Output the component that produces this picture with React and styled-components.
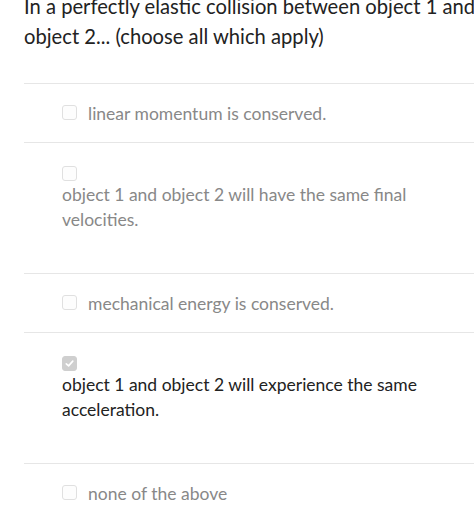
import styled, { createGlobalStyle } from 'styled-components'

const Global = createGlobalStyle`
    html, body {
        margin: 0;
        padding: 0;
        background: #fff;
        overflow: hidden;
    }
    body {
        font-family: Lato, "Open Sans", sans-serif;
    }
`

const Page = styled.div`
    width: 474px;
    height: 512px;
    overflow: hidden;
    padding-left: 24px;
    box-sizing: border-box;
`

const Question = styled.div`
    margin-top: -9px;
    margin-bottom: 32px;
    font-size: 20.2px;
    line-height: 30px;
    color: #222;
    width: 470px;
`

const Answers = styled.div`
    display: flex;
    flex-direction: column;
`

const Option = styled.label`
    display: flex;
    flex-direction: ${props => props.stacked ? 'column' : 'row'};
    align-items: ${props => props.stacked ? 'flex-start' : 'center'};
    border-top: 1px solid #e6e6e6;
    padding: ${props => props.stacked ? '17px 0 41px 38px' : '17px 0 16px 38px'};
    font-size: 17.5px;
    line-height: 25px;
    color: ${props => props.checked ? '#222' : '#888'};
`

const Box = styled.span`
    flex: none;
    width: 15px;
    height: 15px;
    box-sizing: border-box;
    border-radius: 3px;
    border: 1px solid ${props => props.checked ? '#cfcfcf' : '#e0e0e0'};
    background: ${props => props.checked ? '#cfcfcf' : '#fdfdfd'};
    display: flex;
    align-items: center;
    justify-content: center;
    margin: ${props => props.stacked ? '6px 0 1px 0' : '-3px 11px 0 0'};
`

const Text = styled.span`
    display: block;
    max-width: 412px;
`

const Check = () => (
    <svg width="11" height="11" viewBox="0 0 12 12">
        <path d="M2.5 6.3 L5 8.6 L9.6 3.4" fill="none" stroke="#fff" strokeWidth="1.8" strokeLinecap="round" strokeLinejoin="round" />
    </svg>
)

const answers = [
    { text: 'linear momentum is conserved.' },
    { text: 'object 1 and object 2 will have the same final velocities.', stacked: true },
    { text: 'mechanical energy is conserved.' },
    { text: 'object 1 and object 2 will experience the same acceleration.', stacked: true, checked: true },
    { text: 'none of the above' },
]

export default function App() {
    return (
        <Page>
            <Global />
            <Question>In a perfectly elastic collision between object 1 and object 2... (choose all which apply)</Question>
            <Answers>
                {answers.map(a => (
                    <Option key={a.text} stacked={a.stacked} checked={a.checked}>
                        <Box stacked={a.stacked} checked={a.checked}>
                            {a.checked && <Check />}
                        </Box>
                        <Text>{a.text}</Text>
                    </Option>
                ))}
            </Answers>
        </Page>
    )
}
